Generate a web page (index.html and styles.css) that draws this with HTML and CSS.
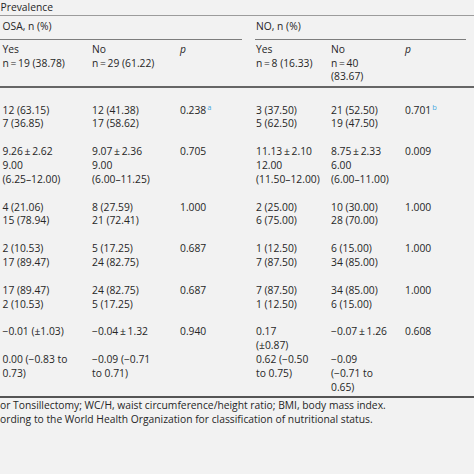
FILE: index.html
```html
<!DOCTYPE html>
<html>
<head>
<meta charset="utf-8">
<link rel="stylesheet" href="styles.css">
</head>
<body>
<div class="page">
  <div class="prev">Prevalence</div>
  <div class="row grp">
    <div class="g osa">OSA, n (%)</div>
    <div class="g no">NO, n (%)</div>
  </div>
  <div class="row sub">
    <div class="c c1">Yes<br>n&thinsp;=&thinsp;19 (38.78)</div>
    <div class="c">No<br>n&thinsp;=&thinsp;29 (61.22)</div>
    <div class="c"><i class="p">p</i></div>
    <div class="c">Yes<br>n&thinsp;=&thinsp;8 (16.33)</div>
    <div class="c">No<br>n&thinsp;=&thinsp;40<br>(83.67)</div>
    <div class="c"><i class="p">p</i></div>
  </div>
  <div class="tbody">
    <div class="row br first">
      <div class="c c1">12 (63.15)<br>7 (36.85)</div>
      <div class="c">12 (41.38)<br>17 (58.62)</div>
      <div class="c">0.238<sup class="fn">a</sup></div>
      <div class="c">3 (37.50)<br>5 (62.50)</div>
      <div class="c">21 (52.50)<br>19 (47.50)</div>
      <div class="c">0.701<sup class="fn">b</sup></div>
    </div>
    <div class="row br">
      <div class="c c1">9.26&thinsp;±&thinsp;2.62<br>9.00<br>(6.25–12.00)</div>
      <div class="c">9.07&thinsp;±&thinsp;2.36<br>9.00<br>(6.00–11.25)</div>
      <div class="c">0.705</div>
      <div class="c">11.13&thinsp;±&thinsp;2.10<br>12.00<br>(11.50–12.00)</div>
      <div class="c">8.75&thinsp;±&thinsp;2.33<br>6.00<br>(6.00–11.00)</div>
      <div class="c">0.009</div>
    </div>
    <div class="row br">
      <div class="c c1">4 (21.06)<br>15 (78.94)</div>
      <div class="c">8 (27.59)<br>21 (72.41)</div>
      <div class="c">1.000</div>
      <div class="c">2 (25.00)<br>6 (75.00)</div>
      <div class="c">10 (30.00)<br>28 (70.00)</div>
      <div class="c">1.000</div>
    </div>
    <div class="row br">
      <div class="c c1">2 (10.53)<br>17 (89.47)</div>
      <div class="c">5 (17.25)<br>24 (82.75)</div>
      <div class="c">0.687</div>
      <div class="c">1 (12.50)<br>7 (87.50)</div>
      <div class="c">6 (15.00)<br>34 (85.00)</div>
      <div class="c">1.000</div>
    </div>
    <div class="row br">
      <div class="c c1">17 (89.47)<br>2 (10.53)</div>
      <div class="c">24 (82.75)<br>5 (17.25)</div>
      <div class="c">0.687</div>
      <div class="c">7 (87.50)<br>1 (12.50)</div>
      <div class="c">34 (85.00)<br>6 (15.00)</div>
      <div class="c">1.000</div>
    </div>
    <div class="row br">
      <div class="c c1">−0.01 (±1.03)</div>
      <div class="c">−0.04&thinsp;±&thinsp;1.32</div>
      <div class="c">0.940</div>
      <div class="c">0.17<br>(±0.87)</div>
      <div class="c">−0.07&thinsp;±&thinsp;1.26</div>
      <div class="c">0.608</div>
    </div>
    <div class="row br last">
      <div class="c c1">0.00 (−0.83 to<br>0.73)</div>
      <div class="c">−0.09 (−0.71<br>to 0.71)</div>
      <div class="c"></div>
      <div class="c">0.62 (−0.50<br>to 0.75)</div>
      <div class="c">−0.09<br>(−0.71 to<br>0.65)</div>
      <div class="c"></div>
    </div>
  </div>
  <div class="foot">
    <div>or Tonsillectomy; WC/H, waist circumference/height ratio; BMI, body mass index.</div>
    <div>ording to the World Health Organization for classification of nutritional status.</div>
  </div>
</div>
</body>
</html>
```

FILE: styles.css
```css
html, body {
  margin: 0;
  padding: 0;
  background: #f2f2f2;
}
.page {
  width: 474px;
  height: 474px;
  overflow: hidden;
  font-family: "Open Sans", "Liberation Sans", sans-serif;
  font-size: 10.3px;
  line-height: 13.8px;
  color: #262626;
}
.prev {
  height: 12px;
  line-height: 9px;
  padding-top: 3px;
  padding-left: 0.5px;
  border-bottom: 1px solid #9c9c9c;
  white-space: nowrap;
}
.row {
  display: grid;
  grid-template-columns: 92px 88px 76px 75px 74px 1fr;
}
.c {
  white-space: nowrap;
}
.c1 {
  padding-left: 2.5px;
}
.g {
  padding-top: 4px;
  padding-bottom: 5px;
  border-bottom: 1px solid #7d7d7d;
  white-space: nowrap;
}
.osa {
  grid-column: 1 / 4;
  margin-right: 14px;
  padding-left: 2.5px;
}
.no {
  grid-column: 4 / 7;
  margin-left: -1px;
  margin-right: 8px;
  padding-left: 1px;
}
.sub {
  padding-top: 3px;
  padding-bottom: 1.5px;
  border-bottom: 2px solid #666;
}
.p {
  font-style: italic;
}
.tbody {
  border-bottom: 2px solid #555;
}
.br {
  padding-top: 14px;
}
.br.first {
  padding-top: 16px;
}
.br.last {
  padding-top: 0;
  padding-bottom: 1.5px;
}
.fn {
  color: #4aa8e0;
  font-size: 7.5px;
  line-height: 0;
  vertical-align: 4px;
  margin-left: 1px;
}
.foot {
  padding-top: 1px;
  white-space: nowrap;
}
```
